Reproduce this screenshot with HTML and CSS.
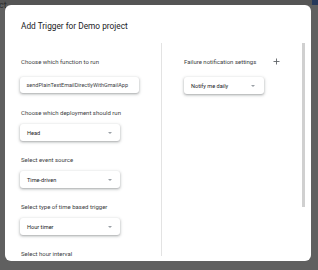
FILE: index.html
```html
<!DOCTYPE html>
<html>
<head>
<meta charset="utf-8">
<link rel="stylesheet" href="styles.css">
</head>
<body>
<div class="page">
  <div class="page-top">
    <span class="page-title">ct</span>
    <span class="page-badge"></span>
  </div>
</div>
<div class="dialog">
  <div class="dialog-header">
    <h1 class="dialog-title">Add Trigger for Demo project</h1>
  </div>
  <div class="dialog-body">
    <div class="col-left">
      <div class="field field-first">
        <div class="label">Choose which function to run</div>
        <div class="box input-box">sendPlainTextEmailDirectlyWithGmailApp</div>
      </div>
      <div class="field">
        <div class="label">Choose which deployment should run</div>
        <div class="box select"><span class="select-text">Head</span><span class="arrow"></span></div>
      </div>
      <div class="field">
        <div class="label">Select event source</div>
        <div class="box select"><span class="select-text">Time-driven</span><span class="arrow"></span></div>
      </div>
      <div class="field">
        <div class="label">Select type of time based trigger</div>
        <div class="box select"><span class="select-text">Hour timer</span><span class="arrow"></span></div>
      </div>
      <div class="field">
        <div class="label">Select hour interval</div>
      </div>
    </div>
    <div class="col-right">
      <div class="notify-row">
        <div class="label">Failure notification settings</div>
        <svg class="plus" width="7" height="7" viewBox="0 0 7 7"><path d="M3.5 0.5V6.5M0.5 3.5H6.5" stroke="#5f6368" stroke-width="0.9" fill="none"/></svg>
      </div>
      <div class="box select notify-select"><span class="select-text">Notify me daily</span><span class="arrow"></span></div>
    </div>
    <div class="scroll-track"><div class="scroll-thumb"></div></div>
  </div>
</div>
</body>
</html>
```
FILE: styles.css
```css
html, body {
  margin: 0;
  padding: 0;
}
body {
  width: 318px;
  height: 270px;
  overflow: hidden;
  position: relative;
  background: #606060;
  font-family: Roboto, "Liberation Sans", sans-serif;
}
.page-top {
  height: 5px;
  background: #555555;
  display: flex;
  justify-content: space-between;
  overflow: visible;
}
.page-title {
  font-size: 9px;
  line-height: 9px;
  color: #2e2e2e;
  margin-top: 1px;
  margin-left: -1px;
  height: 9px;
}
.page-badge {
  width: 6px;
  height: 5px;
  background: #27385a;
}
.dialog {
  position: absolute;
  left: 5px;
  top: 5px;
  width: 306px;
  height: 256px;
  background: #ffffff;
  border-radius: 6px;
  overflow: hidden;
}
.dialog-header {
  height: 38px;
  padding-left: 16px;
  box-sizing: border-box;
  padding-top: 15px;
}
.dialog-title {
  margin: 0;
  font-size: 8.3px;
  line-height: 12px;
  font-weight: 400;
  color: #202124;
}
.dialog-body {
  display: flex;
  height: 213px;
}
.col-left {
  width: 156px;
  box-sizing: border-box;
  padding: 14px 0 0 15px;
  flex: none;
}
.label {
  font-size: 6px;
  line-height: 9px;
  color: #3c4043;
  padding-left: 1px;
  white-space: nowrap;
}
.field {
  margin-top: 14px;
}
.field-first {
  margin-top: 0;
}
.field-first + .field {
  margin-top: 15px;
}
.box {
  background: #ffffff;
  border-radius: 3px;
  box-shadow: 0 1px 2px 0 rgba(60, 64, 67, 0.3), 0 1px 3px 1px rgba(60, 64, 67, 0.15);
  box-sizing: border-box;
}
.input-box {
  width: 119px;
  height: 16px;
  margin-top: 11px;
  padding-left: 6.5px;
  font-size: 5.5px;
  line-height: 16px;
  color: #3c4043;
  white-space: nowrap;
  overflow: hidden;
}
.select {
  width: 100px;
  height: 17px;
  margin-top: 7px;
  padding: 0 8px 0 7px;
  display: flex;
  align-items: center;
  justify-content: space-between;
}
.select-text {
  font-size: 5.6px;
  font-weight: 400;
  color: #202124;
  white-space: nowrap;
}
.arrow {
  width: 0;
  height: 0;
  border-left: 2px solid transparent;
  border-right: 2px solid transparent;
  border-top: 2px solid #9aa0a6;
}
.col-right {
  width: 141px;
  box-sizing: border-box;
  border-left: 1px solid #e3e3e3;
  padding: 14px 22px 0 22px;
  flex: none;
}
.notify-row {
  display: flex;
  justify-content: space-between;
  align-items: center;
}
.notify-row .label {
  padding-left: 0;
}
.plus {
  display: block;
}
.notify-select {
  width: 80px;
  margin-top: 11px;
  padding-right: 9px;
}
.scroll-track {
  width: 3px;
  margin-right: 5px;
  flex: none;
}
.scroll-thumb {
  height: 164px;
  background: #d0d0d0;
}
```
